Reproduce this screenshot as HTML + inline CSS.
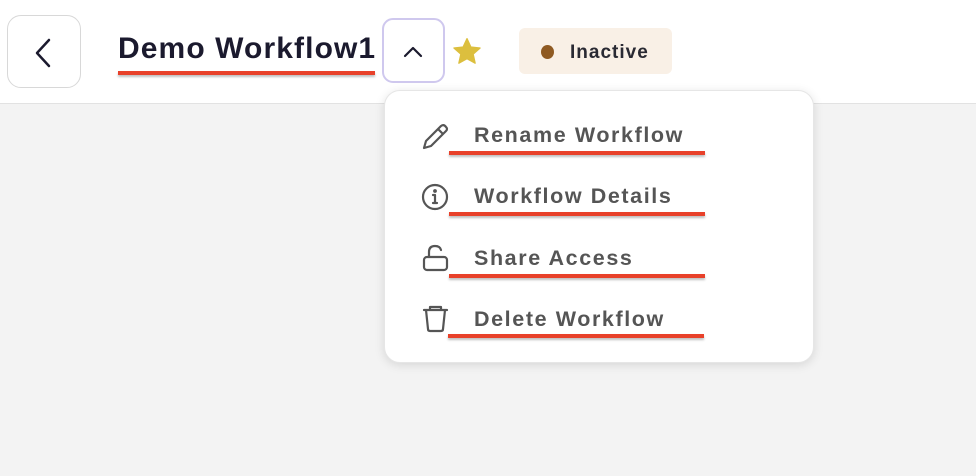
<!DOCTYPE html>
<html><head><style>
*{margin:0;padding:0;box-sizing:border-box}
body{width:976px;height:476px;background:#f3f3f3;font-family:"Liberation Sans",sans-serif;position:relative;overflow:hidden}
.hdr{position:absolute;left:0;top:0;width:976px;height:104px;background:#fff;border-bottom:1px solid #e2e2e2}
.back{position:absolute;left:7px;top:15px;width:74px;height:73px;border:1px solid #d8d8d8;border-radius:14px;background:#fff}
.title{position:absolute;left:118px;top:32px;font-size:30px;font-weight:bold;color:#1b1a2e;letter-spacing:1.1px}
.red{position:absolute;background:#e8412a;height:4px;box-shadow:0 2px 2px rgba(0,0,0,.25)}
.chev{position:absolute;left:382px;top:18px;width:63px;height:65px;border:2px solid #cfc8ee;border-radius:11px;background:#fff}
.badge{position:absolute;left:519px;top:28px;width:153px;height:46px;background:#f9f0e6;border-radius:6px}
.dot{position:absolute;left:22px;top:17px;width:13px;height:14px;border-radius:50%;background:#8f5a22}
.badge span{position:absolute;left:51px;top:14px;font-size:19px;color:#2a2a33;font-weight:bold;letter-spacing:1px}
.menu{position:absolute;left:384px;top:90px;width:430px;height:273px;background:#fff;border-radius:16px;box-shadow:0 2px 10px rgba(0,0,0,.12);border:1px solid #e6e6e6}
.item{position:absolute;left:474px;font-size:21.5px;font-weight:bold;color:#555;letter-spacing:1.6px}
svg.ic{position:absolute}
</style></head><body>
<div class="hdr">
<div class="back"><svg width="74" height="73" style="position:absolute;left:0;top:0"><path d="M41 24 L29 37 L41 50" fill="none" stroke="#1b1a2e" stroke-width="2.5" stroke-linecap="round" stroke-linejoin="round"/></svg></div>
<div class="title">Demo Workflow1</div>
<div class="red" style="left:118px;top:71px;width:257px"></div>
<div class="chev"><svg width="63" height="65" style="position:absolute;left:-2px;top:-2px"><path d="M23 38 L31 30 L39 38" fill="none" stroke="#1b1a2e" stroke-width="2.2" stroke-linecap="round" stroke-linejoin="round"/></svg></div>
<svg class="ic" style="left:451px;top:36px" width="32" height="32" viewBox="0 0 24 24"><path d="M12 2l2.9 6.3 6.9.7-5.2 4.6 1.5 6.8L12 17l-6.1 3.4 1.5-6.8L2.2 9l6.9-.7z" fill="#dcbf3e" stroke="#dcbf3e" stroke-width="1" stroke-linejoin="round"/></svg>
<div class="badge"><div class="dot"></div><span>Inactive</span></div>
</div>
<div class="menu"></div>
<svg class="ic" style="left:420px;top:120px" width="32" height="225" fill="none" stroke="#555" stroke-width="2.2" stroke-linecap="round" stroke-linejoin="round">
<path d="M4 28 L6 21 L21 6 Q24 4 26 7 Q28 9 26 11 L11 26 Z M18 9 L23 14"/>
<circle cx="15" cy="77" r="12"/><path d="M15 75 V83 M13 83 H17 M13 75 H15"/><circle cx="15" cy="71" r="0.8" fill="#555"/>
<rect x="4" y="137" width="23" height="13" rx="3"/><path d="M9 137 V132 Q9 126 15 126 Q20 126 21 130"/>
<path d="M4 190 H27 M10 190 V187 H21 V190 M6 190 L8 209 Q8 211 10 211 H21 Q23 211 23 209 L25 190"/>
</svg>
<div class="item" style="top:123px">Rename Workflow</div>
<div class="item" style="top:184px">Workflow Details</div>
<div class="item" style="top:246px">Share Access</div>
<div class="item" style="top:307px">Delete Workflow</div>
<div class="red" style="left:449px;top:151px;width:256px"></div>
<div class="red" style="left:449px;top:212px;width:256px"></div>
<div class="red" style="left:449px;top:274px;width:256px"></div>
<div class="red" style="left:448px;top:334px;width:256px"></div>
</body></html>
